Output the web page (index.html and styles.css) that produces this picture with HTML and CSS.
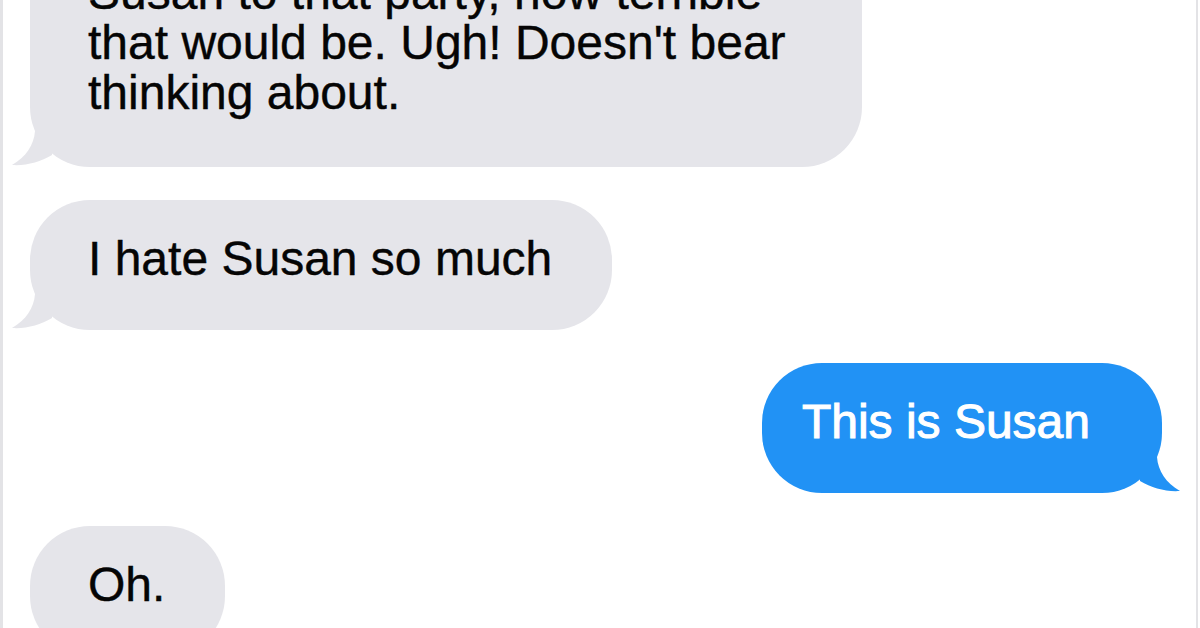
FILE: index.html
```html
<!DOCTYPE html>
<html lang="en">
<head>
<meta charset="utf-8">
<title>Messages</title>
<link rel="stylesheet" href="styles.css">
</head>
<body>
<div class="screen">
  <div class="thread">
    <div class="msg msg--in msg--long">
      <p class="msg__text">Susan to that party, how terrible that would be. Ugh! Doesn't bear thinking about.</p>
      <svg class="tail tail--in" viewBox="0 0 44 36" aria-hidden="true"><path d="M25 0 C24 14 16 26 2 34 C16 35 30 31 42 24 L42 0 Z"/></svg>
    </div>
    <div class="msg msg--in">
      <p class="msg__text">I hate Susan so much</p>
      <svg class="tail tail--in" viewBox="0 0 44 36" aria-hidden="true"><path d="M25 0 C24 14 16 26 2 34 C16 35 30 31 42 24 L42 0 Z"/></svg>
    </div>
    <div class="msg msg--out">
      <p class="msg__text">This is Susan</p>
      <svg class="tail tail--out" viewBox="0 0 44 36" aria-hidden="true"><path d="M19 0 C20 14 28 26 42 34 C28 35 14 31 2 24 L2 0 Z"/></svg>
    </div>
    <div class="msg msg--in">
      <p class="msg__text">Oh.</p>
    </div>
  </div>
</div>
</body>
</html>
```

FILE: styles.css
```css
html, body {
  margin: 0;
  padding: 0;
  background: #ffffff;
  overflow: hidden;
}

.screen {
  width: 1198px;
  height: 628px;
  box-sizing: border-box;
  border-left: 3px solid #e3e3e6;
  border-right: 2px solid #e3e3e6;
  overflow: hidden;
  background: #ffffff;
}

.thread {
  display: flex;
  flex-direction: column;
  align-items: flex-start;
  gap: 33px;
  padding-left: 27px;
  margin-top: -66px;
}

.msg {
  position: relative;
  box-sizing: border-box;
  max-width: 832px;
  padding: 34px 60px 46px 58px;
  border-radius: 60px;
  font-family: "Liberation Sans", Arial, Helvetica, sans-serif;
  font-size: 48px;
  line-height: 50px;
}

.msg--long {
  padding-bottom: 49px;
}

.msg__text {
  margin: 0;
}

.msg--in {
  background: #e5e5ea;
  color: #050505;
  -webkit-text-stroke: 0.4px #050505;
}

.msg--out {
  align-self: flex-end;
  margin-right: 34px;
  padding: 34px 72px 46px 40px;
  background: #2192f5;
  color: #ffffff;
  -webkit-text-stroke: 1px #ffffff;
}

.tail {
  position: absolute;
  bottom: 0;
  width: 44px;
  height: 36px;
}

.tail--in {
  left: -20px;
  fill: #e5e5ea;
}

.tail--out {
  right: -20px;
  fill: #2192f5;
}
```
